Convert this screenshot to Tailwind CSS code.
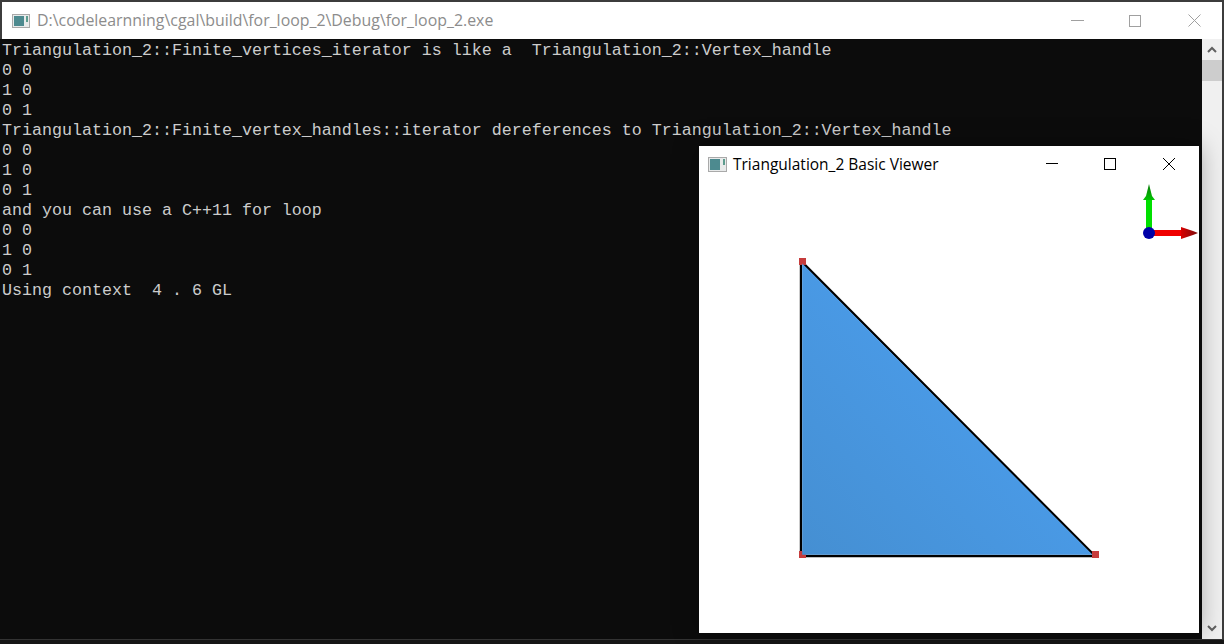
<!DOCTYPE html>
<html>
<head>
    <meta charset="UTF-8">
    <title>for_loop_2.exe</title>
    <script src="https://cdn.jsdelivr.net/npm/@tailwindcss/browser@4"></script>
</head>
<body class="bg-[#3a3a3a] overflow-hidden">
    <div class="relative w-[1224px] h-[644px] flex flex-col overflow-hidden">
        <!-- Console window -->
        <div class="h-[2px] bg-[#3c3c3c]"></div>
        <div class="h-[37px] bg-white flex items-center pl-[10px] border-l-[2px] border-r-[2px] border-[#3c3c3c]">
            <svg class="w-[18px] h-[14px] mr-[7px]" viewBox="0 0 18 14">
                <rect x="0.5" y="0.5" width="17" height="13" fill="#e8eaea" stroke="#a9a9a9"/>
                <rect x="2" y="2" width="10" height="10" fill="#4d8a8f"/>
                <rect x="14" y="2" width="2" height="6" fill="#5d9c8e"/>
            </svg>
            <span class="font-['Open_Sans'] text-[15.9px] text-[#8c8c8c] whitespace-nowrap">D:\codelearnning\cgal\build\for_loop_2\Debug\for_loop_2.exe</span>
            <div class="ml-auto flex items-center pr-[21px]">
                <div class="w-[13px] h-px bg-[#a0a0a0] mr-[45px]"></div>
                <div class="w-[12px] h-[12px] border border-[#a0a0a0] mr-[47px]"></div>
                <svg class="w-[13px] h-[13px]" viewBox="0 0 13 13"><path d="M0.5 0.5L12.5 12.5M12.5 0.5L0.5 12.5" stroke="#a0a0a0" fill="none"/></svg>
            </div>
        </div>
        <div class="flex h-[600px]">
            <pre class="w-[1202px] bg-[#0c0c0c] pl-[2px] pt-[2px] font-['Liberation_Mono'] text-[16.67px] leading-[20px] text-[#cccccc]">Triangulation_2::Finite_vertices_iterator is like a  Triangulation_2::Vertex_handle
0 0
1 0
0 1
Triangulation_2::Finite_vertex_handles::iterator dereferences to Triangulation_2::Vertex_handle
0 0
1 0
0 1
and you can use a C++11 for loop
0 0
1 0
0 1
Using context  4 . 6 GL</pre>
            <!-- Scrollbar -->
            <div class="w-[20px] bg-[#f0f0f0] flex flex-col items-center">
                <div class="h-[21px] w-full flex items-center justify-center">
                    <svg class="w-[10px] h-[7px]" viewBox="0 0 10 7"><path d="M1 6L5 2L9 6" stroke="#606060" stroke-width="2" fill="none"/></svg>
                </div>
                <div class="h-[21px] w-full bg-[#cdcdcd]"></div>
                <div class="mt-auto h-[21px] w-full flex items-center justify-center">
                    <svg class="w-[10px] h-[7px]" viewBox="0 0 10 7"><path d="M1 1L5 5L9 1" stroke="#606060" stroke-width="2" fill="none"/></svg>
                </div>
            </div>
            <div class="w-[2px] bg-[#3c3c3c]"></div>
        </div>
        <div class="h-[5px] bg-[#161616] border-t border-[#333333]"></div>

        <!-- Viewer window, floating over the console -->
        <div class="absolute left-[699px] top-[146px] w-[500px] h-[487px] bg-white shadow-[0_0_24px_rgba(0,0,0,0.35)]">
            <div class="h-[37px] flex items-center pl-[9px]">
                <svg class="w-[19px] h-[15px] mr-[6px]" viewBox="0 0 19 15">
                    <rect x="0.5" y="0.5" width="18" height="14" fill="#e8eaea" stroke="#a9a9a9"/>
                    <rect x="2" y="2" width="10" height="11" fill="#4d8a8f"/>
                    <rect x="15" y="2" width="2" height="6" fill="#5d9c8e"/>
                </svg>
                <span class="font-['Open_Sans'] text-[15.5px] text-black whitespace-nowrap">Triangulation_2 Basic Viewer</span>
            </div>
            <div class="absolute left-[347px] top-[17px] w-[12px] h-px bg-black"></div>
            <div class="absolute left-[405px] top-[12px] w-[12px] h-[12px] border border-black"></div>
            <svg class="absolute left-[464px] top-[12px] w-[12px] h-[12px]" viewBox="0 0 12 12"><path d="M0 0L12 12M12 0L0 12" stroke="#000" fill="none"/></svg>

            <!-- Scene: triangle outline, corner points, fill on top, axes -->
            <svg class="absolute left-0 top-[37px]" width="500" height="450" viewBox="0 37 500 450">
                <defs>
                    <linearGradient id="fill" x1="0" y1="1" x2="0.6" y2="0.4">
                        <stop offset="0" stop-color="#458fd2"/>
                        <stop offset="1" stop-color="#4a9be8"/>
                    </linearGradient>
                    <linearGradient id="gh" x1="0" y1="0" x2="0" y2="1">
                        <stop offset="0" stop-color="#0a7a0a"/>
                        <stop offset="1" stop-color="#00c400"/>
                    </linearGradient>
                    <linearGradient id="rh" x1="0" y1="0" x2="1" y2="0">
                        <stop offset="0" stop-color="#d80000"/>
                        <stop offset="1" stop-color="#7a0a0a"/>
                    </linearGradient>
                </defs>
                <path d="M102 115V410H396Z" fill="none" stroke="#000" stroke-width="2.4"/>
                <rect x="100" y="112" width="7" height="7" fill="#c63c3c"/>
                <rect x="100" y="405" width="7" height="7" fill="#c63c3c"/>
                <rect x="393" y="405" width="7" height="7" fill="#c63c3c"/>
                <path d="M103.2 117.5V408.8H393.5Z" fill="url(#fill)"/>
                <rect x="447" y="52" width="6" height="34" fill="#00e000"/>
                <path d="M450 38L453 50L456 54H444L447 50Z" fill="url(#gh)"/>
                <rect x="454" y="84" width="30" height="6" fill="#f00000"/>
                <path d="M482 81L494 85L499 87L494 89L482 93Z" fill="url(#rh)"/>
                <circle cx="450" cy="87" r="6" fill="#0000a8"/>
            </svg>
        </div>
    </div>
</body>
</html>
